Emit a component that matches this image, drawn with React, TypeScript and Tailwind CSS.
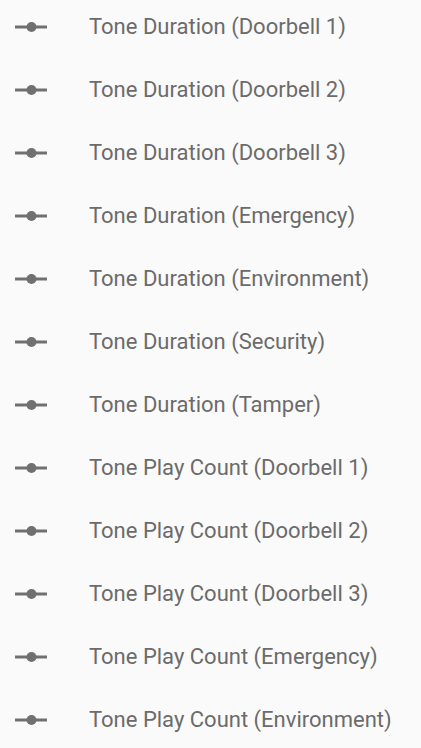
const items = [
  'Tone Duration (Doorbell 1)',
  'Tone Duration (Doorbell 2)',
  'Tone Duration (Doorbell 3)',
  'Tone Duration (Emergency)',
  'Tone Duration (Environment)',
  'Tone Duration (Security)',
  'Tone Duration (Tamper)',
  'Tone Play Count (Doorbell 1)',
  'Tone Play Count (Doorbell 2)',
  'Tone Play Count (Doorbell 3)',
  'Tone Play Count (Emergency)',
  'Tone Play Count (Environment)',
];

const SliderIcon = () => (
  <svg width="32" height="12" viewBox="0 0 32 12" className="shrink-0">
    <rect x="0" y="4.5" width="32" height="3" fill="#707070" />
    <circle cx="16.5" cy="6" r="5" fill="#707070" />
  </svg>
);

export default function App() {
  return (
    <div className="w-[421px] h-[748px] overflow-hidden bg-[#fafafa] font-['Roboto',sans-serif]">
      <div className="-mt-[5px] flex flex-col">
        {items.map(label => (
          <div key={label} className="h-[63px] flex items-center pl-[15px]">
            <SliderIcon />
            <span className="ml-[42px] text-[22px] text-[#6b6b6b] whitespace-nowrap">{label}</span>
          </div>
        ))}
      </div>
    </div>
  );
}
